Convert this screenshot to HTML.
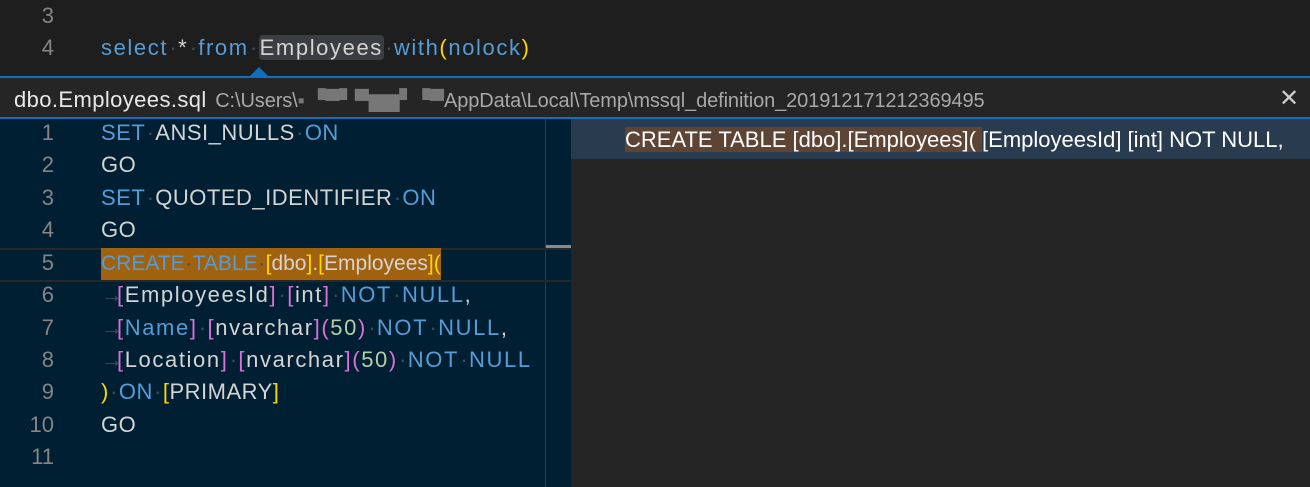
<!DOCTYPE html>
<html><head><meta charset="utf-8"><style>
*{margin:0;padding:0;box-sizing:border-box}
body{width:1310px;height:487px;overflow:hidden;background:#1e1e1e;font-family:"Liberation Sans",sans-serif;font-size:22px;position:relative}
.ln{position:absolute;left:0;width:54px;text-align:right;color:#858585;line-height:32px;height:32px}
.cd{position:absolute;left:101px;line-height:32px;height:32px;color:#d4d4d4;white-space:pre;letter-spacing:0.5px}
.k{color:#569cd6}.y{color:#ffd700}.m{color:#da70d6}.n{color:#b5cea8}
.d{color:#3e4e5c;display:inline-block;width:10px;text-align:center;letter-spacing:0}
.t{color:#3e4e5c;display:inline-block;width:16px;letter-spacing:0}
</style></head><body>
<div class="ln" style="top:0">3</div>
<div class="ln" style="top:32px">4</div>
<div class="cd" style="top:32px;letter-spacing:1.6px"><span class="k">select</span><span class="d">·</span>*<span class="d">·</span><span class="k">from</span><span class="d">·</span><span style="background:#3a3d41;border-radius:4px;padding:0 1px">Employees</span><span class="d">·</span><span class="k">with</span><span class="y">(</span><span class="k">nolock</span><span class="y">)</span></div>
<div style="position:absolute;left:0;top:76px;width:1310px;height:2px;background:#0e70c0"></div>
<div style="position:absolute;left:250px;top:67px;width:0;height:0;border-left:9px solid transparent;border-right:9px solid transparent;border-bottom:9px solid #0e70c0"></div>
<div style="position:absolute;left:0;top:78px;width:1310px;height:39px;background:#252526"></div>
<div style="position:absolute;left:14px;top:87px;color:#e8e8e8;font-size:22px;white-space:nowrap;letter-spacing:0.4px">dbo.Employees.sql <span style="color:#a8a8a8;font-size:20px;margin-left:2px;letter-spacing:-0.1px">C:\Users\<span style="color:#777">▪ ▝▀▘▀▆▆▘▝▀</span>AppData\Local\Temp\mssql_definition_20191217121236949​5</span></div>
<div style="position:absolute;left:1279px;top:84px;color:#cccccc;font-size:24px">✕</div>
<div style="position:absolute;left:0;top:117px;width:1310px;height:2px;background:#0e70c0"></div>
<div style="position:absolute;left:0;top:119px;width:571px;height:368px;background:#001f33"></div>
<div style="position:absolute;left:545px;top:119px;width:1px;height:368px;background:#2a3e52"></div>
<div style="position:absolute;left:546px;top:245px;width:25px;height:3px;background:#8a8a8a"></div>
<div style="position:absolute;left:0;top:248px;width:571px;height:2px;background:#282828"></div>
<div style="position:absolute;left:0;top:280px;width:571px;height:2px;background:#282828"></div>
<div style="position:absolute;left:571px;top:119px;width:739px;height:368px;background:#252526"></div>
<div style="position:absolute;left:571px;top:119px;width:739px;height:40px;background:#283b4f"></div>
<div style="position:absolute;left:625px;top:124px;line-height:31px;color:#ffffff;white-space:pre;font-size:22px;letter-spacing:0"><span style="background:#5e4434">CREATE TABLE [dbo].[Employees]( </span>[EmployeesId] [int] NOT NULL,</div>
<div class="ln" style="top:117px">1</div>
<div class="ln" style="top:149px">2</div>
<div class="ln" style="top:182px">3</div>
<div class="ln" style="top:214px">4</div>
<div class="ln" style="top:247px">5</div>
<div class="ln" style="top:279px">6</div>
<div class="ln" style="top:312px">7</div>
<div class="ln" style="top:344px">8</div>
<div class="ln" style="top:376px">9</div>
<div class="ln" style="top:409px">10</div>
<div class="ln" style="top:441px">11</div>
<div class="cd" style="top:117px"><span class="k">SET</span><span class="d">·</span>ANSI_NULLS<span class="d">·</span><span class="k">ON</span></div>
<div class="cd" style="top:149px">GO</div>
<div class="cd" style="top:182px"><span class="k">SET</span><span class="d">·</span>QUOTED_IDENTIFIER<span class="d">·</span><span class="k">ON</span></div>
<div class="cd" style="top:214px">GO</div>
<div class="cd" style="top:248px;background:#a0620f;letter-spacing:0;font-size:21px"><span class="k">CREATE</span><span class="d" style="width:8px">·</span><span class="k">TABLE</span><span class="d" style="width:8px">·</span><span class="y">[</span>dbo<span class="y">]</span>.<span class="y">[</span>Employees<span class="y">](</span></div>
<div class="cd" style="top:279px;letter-spacing:1.6px"><span class="t">→</span><span class="m">[</span>EmployeesId<span class="m">]</span><span class="d">·</span><span class="m">[</span>int<span class="m">]</span><span class="d">·</span><span class="k">NOT</span><span class="d">·</span><span class="k">NULL</span>,</div>
<div class="cd" style="top:312px;letter-spacing:1.6px"><span class="t">→</span><span class="m">[</span><span class="k">Name</span><span class="m">]</span><span class="d">·</span><span class="m">[</span>nvarchar<span class="m">](</span><span class="n">50</span><span class="m">)</span><span class="d">·</span><span class="k">NOT</span><span class="d">·</span><span class="k">NULL</span>,</div>
<div class="cd" style="top:344px;letter-spacing:1.6px"><span class="t">→</span><span class="m">[</span>Location<span class="m">]</span><span class="d">·</span><span class="m">[</span>nvarchar<span class="m">](</span><span class="n">50</span><span class="m">)</span><span class="d">·</span><span class="k">NOT</span><span class="d">·</span><span class="k">NULL</span></div>
<div class="cd" style="top:376px"><span class="y">)</span><span class="d">·</span><span class="k">ON</span><span class="d">·</span><span class="y">[</span>PRIMARY<span class="y">]</span></div>
<div class="cd" style="top:409px">GO</div>
</body></html>
